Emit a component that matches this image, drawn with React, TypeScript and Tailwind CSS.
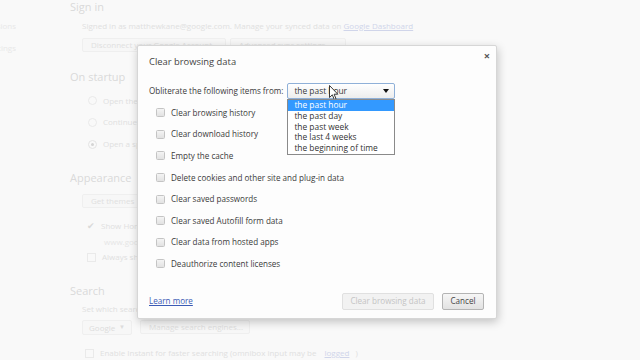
import { useState } from 'react';

const items = [
  'Clear browsing history',
  'Clear download history',
  'Empty the cache',
  'Delete cookies and other site and plug-in data',
  'Clear saved passwords',
  'Clear saved Autofill form data',
  'Clear data from hosted apps',
  'Deauthorize content licenses',
];

const ranges = [
  'the past hour',
  'the past day',
  'the past week',
  'the last 4 weeks',
  'the beginning of time',
];

const Checkbox = () => (
  <span className="w-[9px] h-[9px] rounded-[1.5px] border border-[#c4c4c4] bg-gradient-to-b from-[#f4f4f4] to-[#e2e2e2] shrink-0" />
);

const FadedButton = ({ label, w }: { label: string; w: string }) => (
  <div
    className={`h-[14px] ${w} shrink-0 border border-[#efefef] rounded-[2px] bg-[#f7f7f7] text-[#e0e0e0] text-[8px] px-[8px] flex items-center whitespace-nowrap overflow-hidden`}
  >
    {label}
  </div>
);

// rows that run under the dialog get clipped at its left edge
const hidden = 'w-[67px] overflow-hidden';

const SettingsPage = () => (
  <div className="flex w-[640px] h-[360px] bg-[#f9f9f9] text-[#e0e0e0] overflow-hidden">
    <div className="w-[16px] shrink-0 flex flex-col items-end overflow-hidden text-[8px] text-[#e8e8e8] whitespace-nowrap">
      <div className="mt-[20px] flex justify-end w-full">Extensions</div>
      <div className="mt-[10px] flex justify-end w-full">Settings</div>
    </div>
    <div className="pl-[54px] flex flex-col text-[8px] whitespace-nowrap">
      <div className="h-[14px] flex items-center text-[11px] text-[#dadada]">Sign in</div>
      <div className="mt-[5px] h-[14px] flex items-center pl-[12px]">
        Signed in as matthewkane@google.com. Manage your synced data on&nbsp;
        <span className="underline text-[#d0d5ea]">Google Dashboard</span>
      </div>
      <div className="mt-[5px] h-[14px] flex gap-[4px] pl-[12px]">
        <FadedButton label="Disconnect your Google Account..." w="w-[144px]" />
        <FadedButton label="Advanced sync settings..." w="w-[116px]" />
      </div>
      <div className="mt-[18px] h-[14px] flex items-center text-[11px] text-[#dadada]">On startup</div>
      <div className={`mt-[10px] h-[14px] flex items-center gap-[6px] pl-[18px] ${hidden}`}>
        <span className="w-[9px] h-[9px] shrink-0 rounded-full border border-[#eaeaea]" />
        Open the New Tab page
      </div>
      <div className={`mt-[8px] h-[14px] flex items-center gap-[6px] pl-[18px] ${hidden}`}>
        <span className="w-[9px] h-[9px] shrink-0 rounded-full border border-[#eaeaea]" />
        Continue where I left off
      </div>
      <div className={`mt-[8px] h-[14px] flex items-center gap-[6px] pl-[18px] ${hidden}`}>
        <span className="w-[9px] h-[9px] shrink-0 rounded-full border border-[#e4e4e4] flex items-center justify-center">
          <span className="w-[3px] h-[3px] rounded-full bg-[#d4d4d4]" />
        </span>
        Open a specific page or set of pages
      </div>
      <div className="mt-[20px] h-[14px] flex items-center text-[11px] text-[#dadada]">Appearance</div>
      <div className={`mt-[9px] h-[14px] flex pl-[12px] ${hidden}`}>
        <FadedButton label="Get themes" w="w-[80px]" />
      </div>
      <div className={`mt-[11px] h-[14px] flex items-center gap-[6px] pl-[17px] ${hidden}`}>
        <span className="text-[#dadada] text-[9px]">✔</span>
        Show Home button
      </div>
      <div className={`mt-[2px] h-[14px] flex items-center pl-[34px] text-[#e6e6e6] ${hidden}`}>
        www.google.com
      </div>
      <div className={`mt-[2px] h-[14px] flex items-center gap-[6px] pl-[17px] ${hidden}`}>
        <span className="w-[9px] h-[9px] shrink-0 border border-[#eaeaea]" />
        Always show the bookmarks bar
      </div>
      <div className="mt-[20px] h-[14px] flex items-center text-[11px] text-[#dadada]">Search</div>
      <div className={`mt-[4px] h-[14px] flex items-center pl-[12px] ${hidden}`}>
        Set which search engine is used when searching from the omnibox.
      </div>
      <div className="mt-[4px] h-[15px] flex gap-[8px] pl-[12px]">
        <div className="h-[15px] w-[50px] border border-[#efefef] rounded-[2px] bg-[#f7f7f7] text-[#dcdcdc] flex items-center justify-between px-[6px]">
          Google <span className="text-[6px]">▼</span>
        </div>
        <FadedButton label="Manage search engines..." w="w-[110px]" />
      </div>
      <div className="mt-[11px] h-[14px] flex items-center gap-[6px] pl-[15px]">
        <span className="w-[9px] h-[9px] border border-[#eaeaea]" />
        Enable Instant for faster searching (omnibox input may be&nbsp;
        <span className="underline text-[#d0d5ea]">logged</span>)
      </div>
    </div>
  </div>
);

const Cursor = () => (
  <svg width="10" height="16" viewBox="0 0 10 16" className="absolute left-[329px] top-[85px]">
    <path
      d="M0.5 0.5 L0.5 12.5 L3.3 9.8 L5.3 14.5 L7 13.8 L5.1 9.2 L8.8 9.2 Z"
      fill="#ffffff"
      stroke="#222222"
      strokeWidth="0.9"
      strokeLinejoin="round"
    />
  </svg>
);

const ClearDialog = () => {
  const [selected] = useState(0);

  return (
    <div className="absolute left-[137px] top-[45px] w-[360px] h-[274px] bg-[#fdfdfd] border border-[#d6d6d6] rounded-[2px] shadow-[1px_3px_10px_rgba(0,0,0,0.22)] flex flex-col text-[#3a3a3a] pl-[11px] pr-[12px]">
      <button className="absolute right-[6px] top-[4px] text-[11px] leading-none text-[#555] font-bold">
        ×
      </button>
      <h2 className="mt-[9px] h-[14px] flex items-center text-[9.4px] text-[#444]">
        Clear browsing data
      </h2>
      <div className="mt-[14px] h-[16px] flex items-center gap-[4px] text-[8.1px]">
        <span>Obliterate the following items from:</span>
        <div className="relative text-[8.4px]">
          <div className="w-[108px] h-[16px] border border-[#8fb0d8] rounded-[2px] bg-gradient-to-b from-[#ffffff] to-[#ededed] flex items-center justify-between pl-[6px] pr-[5px]">
            <span>{ranges[selected]}</span>
            <span className="w-0 h-0 border-l-[3px] border-r-[3px] border-t-[4px] border-l-transparent border-r-transparent border-t-[#111]" />
          </div>
          <ul className="absolute left-0 top-[16px] w-[108px] bg-white border border-[#8a8a8a] z-10">
            {ranges.map((r, i) => (
              <li
                key={r}
                className={`h-[10.8px] flex items-center pl-[6px] ${
                  i === selected ? 'bg-[#3399ff] text-white' : 'text-[#333]'
                }`}
              >
                {r}
              </li>
            ))}
          </ul>
        </div>
      </div>
      <ul className="mt-[3px] flex flex-col text-[8.1px]">
        {items.map((label) => (
          <li key={label} className="h-[21.6px] flex items-center gap-[6px] pl-[7px]">
            <Checkbox />
            <span>{label}</span>
          </li>
        ))}
      </ul>
      <div className="mt-auto mb-[8px] h-[17px] flex items-center text-[8.1px]">
        <a className="underline text-[#3b5bb5]" href="#">
          Learn more
        </a>
        <div className="ml-auto flex gap-[8px]">
          <button className="w-[92px] h-[17px] border border-[#e0e0e0] rounded-[2px] bg-[#f2f2f2] text-[#c4c4c4]">
            Clear browsing data
          </button>
          <button className="w-[42px] h-[17px] border border-[#b4b4b4] rounded-[2px] bg-gradient-to-b from-[#f6f6f6] to-[#e2e2e2] text-[#444]">
            Cancel
          </button>
        </div>
      </div>
    </div>
  );
};

export default function App() {
  return (
    <div className="relative w-[640px] h-[360px] overflow-hidden font-['Open_Sans',sans-serif]">
      <SettingsPage />
      <ClearDialog />
      <Cursor />
    </div>
  );
}
